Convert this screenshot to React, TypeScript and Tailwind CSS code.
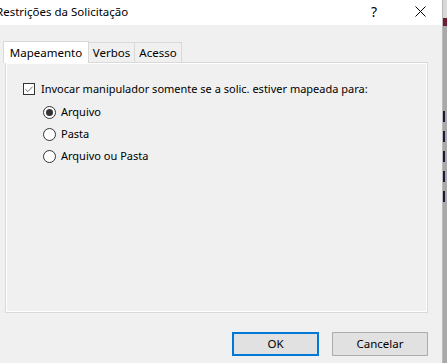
import { Check } from "lucide-react";

type RadioProps = { label: string; checked?: boolean };

function Radio({ label, checked }: RadioProps) {
  return (
    <div className="flex items-center h-[22px]">
      <span className="w-[13px] h-[13px] rounded-full border border-[#333333] bg-white flex items-center justify-center">
        {checked && <span className="w-[7px] h-[7px] rounded-full bg-[#333333]" />}
      </span>
      <span className="ml-[5px]">{label}</span>
    </div>
  );
}

export default function App() {
  return (
    <div
      className="w-[448px] h-[363px] flex overflow-hidden text-[11px] text-black"
      style={{ fontFamily: '"Noto Sans", "Open Sans", sans-serif' }}
    >
      {/* dialog */}
      <div className="w-[443px] h-full flex flex-col bg-[#f0f0f0] border-r border-[#b9b9b9]">
        {/* title bar */}
        <div className="h-[25px] bg-white flex items-center shrink-0 text-[11.5px] pb-[2px]">
          <span className="ml-[-4px] flex-1">Restrições da Solicitação</span>
          <span className="w-[10px] text-center text-[14px] mr-[36px]">?</span>
          <svg width="11" height="11" viewBox="0 0 11 11" className="mr-[16px]">
            <path d="M0.5 0.5 L10.5 10.5 M10.5 0.5 L0.5 10.5" stroke="#000" strokeWidth="1" />
          </svg>
        </div>

        {/* tabs */}
        <div className="flex items-end h-[37px] pl-[3px] shrink-0 text-[11.5px]">
          <div className="w-[86px] h-[22px] bg-white border border-b-0 border-[#d9d9d9] flex items-center justify-center -mb-px relative z-10">
            Mapeamento
          </div>
          <div className="w-[46px] h-[20px] border-t border-r border-[#d9d9d9] flex items-center justify-center">
            Verbos
          </div>
          <div className="w-[47px] h-[20px] border-t border-r border-[#d9d9d9] flex items-center justify-center">
            Acesso
          </div>
        </div>

        {/* panel */}
        <div className="ml-[5px] w-[423px] h-[251px] border border-[#d9d9d9] shrink-0">
          <div className="h-full border border-white pt-[19px] pl-[16px]">
            <div className="flex items-center h-[12px]">
              <span className="w-[12px] h-[12px] border border-[#333333] bg-white flex items-center justify-center">
                <Check size={11} strokeWidth={1.6} color="#222" />
              </span>
              <span className="ml-[6px]">Invocar manipulador somente se a solic. estiver mapeada para:</span>
            </div>
            <div className="pl-[20px] mt-[6px] flex flex-col">
              <Radio label="Arquivo" checked />
              <Radio label="Pasta" />
              <Radio label="Arquivo ou Pasta" />
            </div>
          </div>
        </div>

        {/* buttons */}
        <div className="flex justify-end gap-[13px] pr-[14px] mt-[19px] text-[11.5px]">
          <button className="w-[87px] h-[24px] bg-[#e1e1e1] border-2 border-[#0078d7] flex items-center justify-center">
            OK
          </button>
          <button className="w-[96px] h-[24px] bg-[#e1e1e1] border border-[#adadad] flex items-center justify-center">
            Cancelar
          </button>
        </div>
      </div>

      {/* background window edge */}
      <div className="w-[4px] h-full bg-[#a9a9a9] flex flex-col">
        <div className="h-[18px] bg-[#d8d8d8]" />
        <div className="h-[8px] bg-[#6b2030]" />
        <div className="h-[80px]" />
        {["", "", "", "", ""].map((_, i) => (
          <div key={i} className="h-[20px] flex items-center">
            <div className="w-[2px] h-[11px] bg-[#1a1a3a]" />
          </div>
        ))}
      </div>
    </div>
  );
}
